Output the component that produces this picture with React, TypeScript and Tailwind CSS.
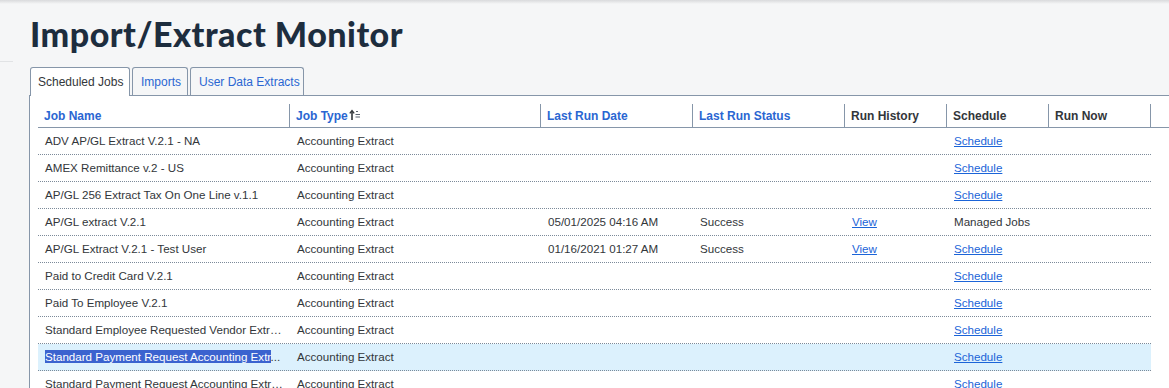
import React from 'react';

type Row = {
  name: string;
  type: string;
  date?: string;
  status?: string;
  history?: boolean;
  schedule: 'link' | 'managed';
  selected?: boolean;
};

const rows: Row[] = [
  { name: 'ADV AP/GL Extract V.2.1 - NA', type: 'Accounting Extract', schedule: 'link' },
  { name: 'AMEX Remittance v.2 - US', type: 'Accounting Extract', schedule: 'link' },
  { name: 'AP/GL 256 Extract Tax On One Line v.1.1', type: 'Accounting Extract', schedule: 'link' },
  { name: 'AP/GL extract V.2.1', type: 'Accounting Extract', date: '05/01/2025 04:16 AM', status: 'Success', history: true, schedule: 'managed' },
  { name: 'AP/GL Extract V.2.1 - Test User', type: 'Accounting Extract', date: '01/16/2021 01:27 AM', status: 'Success', history: true, schedule: 'link' },
  { name: 'Paid to Credit Card V.2.1', type: 'Accounting Extract', schedule: 'link' },
  { name: 'Paid To Employee V.2.1', type: 'Accounting Extract', schedule: 'link' },
  { name: 'Standard Employee Requested Vendor Extract V.2.1', type: 'Accounting Extract', schedule: 'link' },
  { name: 'Standard Payment Request Accounting Extract V.2.1', type: 'Accounting Extract', schedule: 'link', selected: true },
  { name: 'Standard Payment Request Accounting Extract V.2.1 - US', type: 'Accounting Extract', schedule: 'link' },
];

const SortIcon = () => (
  <svg width="12" height="12" viewBox="0 0 12 12" className="ml-[1px] mt-[-2px]" fill="none">
    <path d="M3 11V2" stroke="#32363a" strokeWidth="1.6" />
    <path d="M0.8 4.4L3 1.6L5.2 4.4" stroke="#32363a" strokeWidth="1.4" fill="none" />
    <path d="M7 2.5H9M6.5 5.5H11M6.5 8H11" stroke="#5b6470" strokeWidth="1" />
  </svg>
);

const Header = ({ label, blue, w, sort }: { label: string; blue?: boolean; w: string; sort?: boolean }) => (
  <div className={`${w} shrink-0 h-[23px] border-r border-[#8696a9] flex items-center px-[6px] font-bold text-[12px] ${blue ? 'text-[#2a66d2]' : 'text-[#32363a]'}`}>
    {label}
    {sort && <SortIcon />}
  </div>
);

export default function App() {
  return (
    <div className="w-[1169px] h-[388px] overflow-hidden bg-[#f5f6f7]" style={{ fontFamily: '"Liberation Sans", Arial, sans-serif' }}>
      <div className="h-[4px] bg-gradient-to-b from-[#d9dadc] to-[#f5f6f7]" />
      <div className="flex">
        <div className="w-[29px] shrink-0">
          <div className="mt-[57px] w-[13px] h-px bg-[#e1e3e5]" />
        </div>
        <div className="flex-1 min-w-0">
          <h1 className="h-[63px] pt-[10px] pl-[1px] text-[34px] leading-[40px] font-black text-[#1d2d3e] tracking-[0.5px]" style={{ fontFamily: 'Lato, sans-serif' }}>
            Import/Extract Monitor
          </h1>
          <div className="flex gap-[2px] h-[28px] items-end pl-[1px]">
            <div className="h-[29px] w-[100px] bg-white border border-b-0 border-[#8696a9] rounded-t-[3px] px-[7px] flex items-center whitespace-nowrap text-[12px] text-[#32363a] relative z-10 -mb-px">
              Scheduled Jobs
            </div>
            <div className="h-[28px] w-[56px] bg-[#f5f6f7] border border-b-0 border-[#8696a9] rounded-t-[3px] px-[8px] flex items-center whitespace-nowrap text-[12px] text-[#2a66d2]">
              Imports
            </div>
            <div className="h-[28px] w-[114px] bg-[#f5f6f7] border border-b-0 border-[#8696a9] rounded-t-[3px] px-[8px] flex items-center whitespace-nowrap text-[12px] text-[#2a66d2]">
              User Data Extracts
            </div>
          </div>
          <div className="bg-white border-t border-l border-[#8696a9] pl-[8px] pt-[8px] h-[400px]">
            <div className="flex border-b border-[#8696a9]">
              <Header label="Job Name" blue w="w-[252px]" />
              <Header label="Job Type" blue w="w-[251px]" sort />
              <Header label="Last Run Date" blue w="w-[152px]" />
              <Header label="Last Run Status" blue w="w-[152px]" />
              <Header label="Run History" w="w-[102px]" />
              <Header label="Schedule" w="w-[102px]" />
              <Header label="Run Now" w="w-[102px]" />
            </div>
            <div className="w-[1113px]">
              {rows.map((r, i) => (
                <div key={i} className={`flex h-[27px] border-b border-dotted border-[#7c8a99] text-[11.6px] text-[#32363a] items-center ${r.selected ? 'bg-[#dcf1fd]' : ''}`}>
                  <div className="w-[252px] shrink-0 pl-[7px] pr-[4px] truncate">
                    {r.selected ? (
                      <>
                        <span className="bg-[#3b63cf] text-white">Standard Payment Request Accounting Extr</span>...
                      </>
                    ) : (
                      r.name
                    )}
                  </div>
                  <div className="w-[251px] shrink-0 pl-[7px] truncate">{r.type}</div>
                  <div className="w-[152px] shrink-0 pl-[7px]">{r.date}</div>
                  <div className="w-[152px] shrink-0 pl-[7px]">{r.status}</div>
                  <div className="w-[102px] shrink-0 pl-[7px]">
                    {r.history && <span className="text-[#1b64d8] underline">View</span>}
                  </div>
                  <div className="w-[102px] shrink-0 pl-[7px]">
                    {r.schedule === 'link' ? <span className="text-[#1b64d8] underline">Schedule</span> : 'Managed Jobs'}
                  </div>
                  <div className="w-[102px] shrink-0" />
                </div>
              ))}
            </div>
          </div>
        </div>
      </div>
    </div>
  );
}
